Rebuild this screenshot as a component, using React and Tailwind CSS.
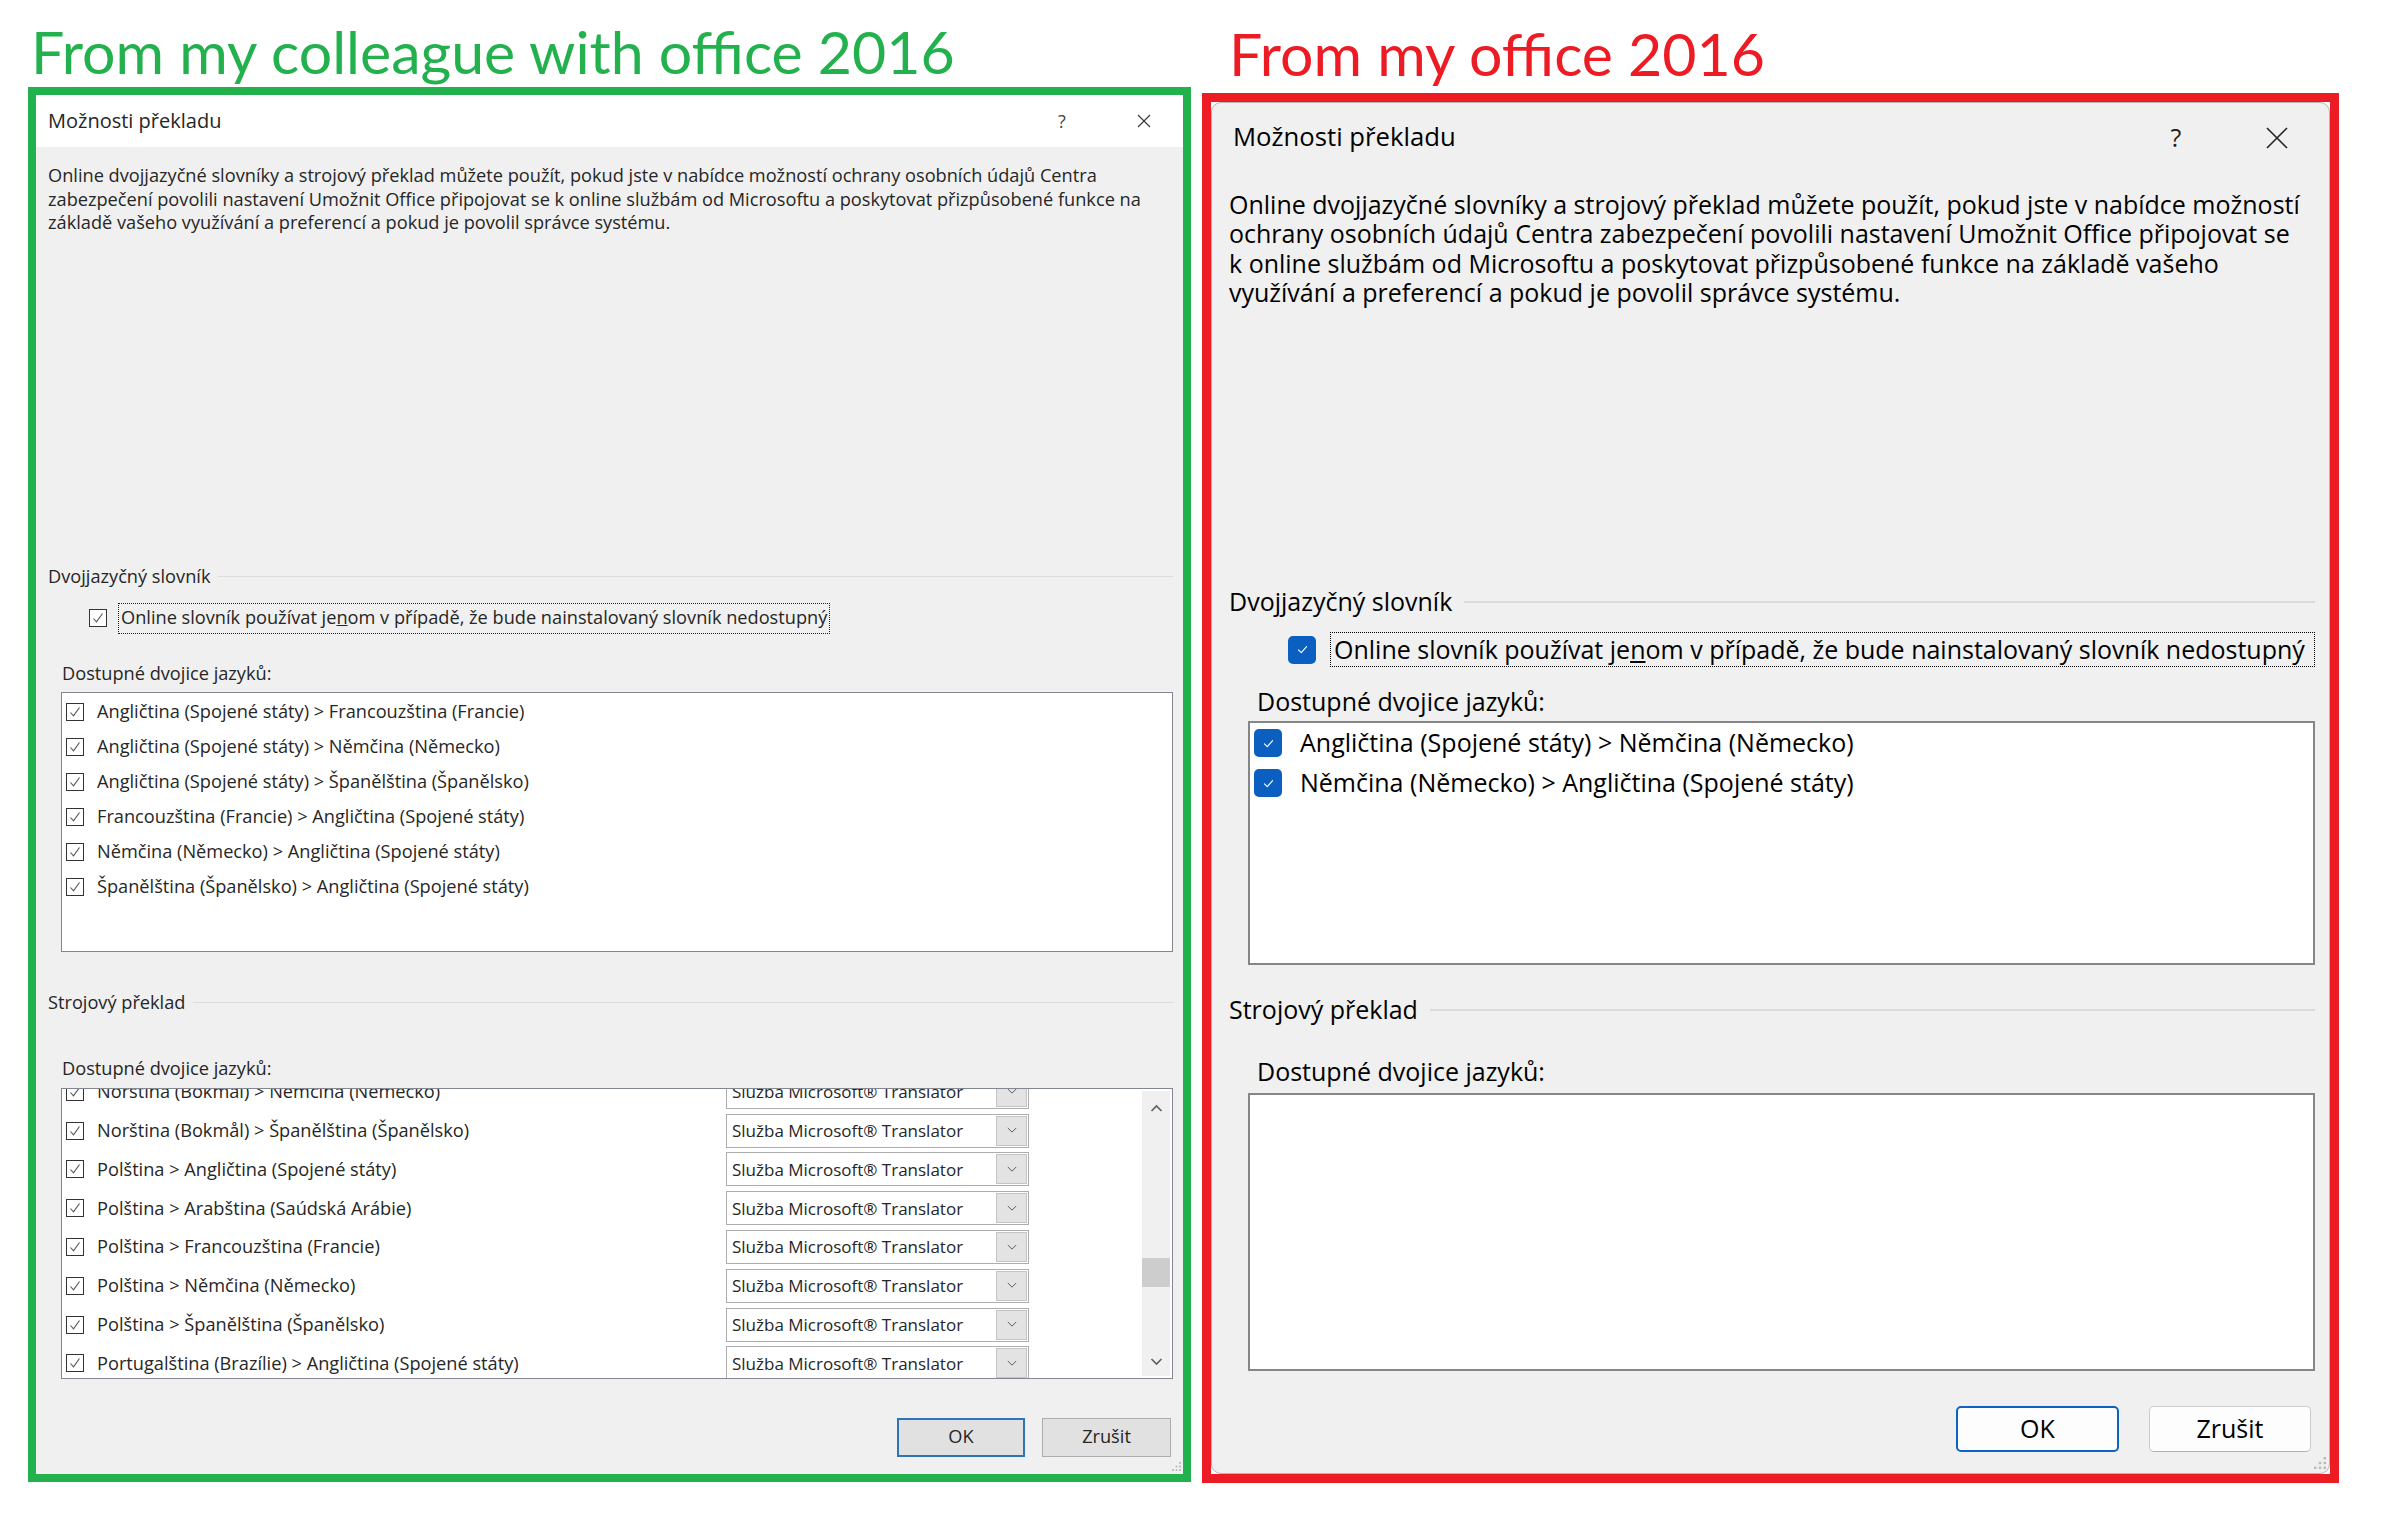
import React from "react";

const OS = "font-['Open_Sans','Noto_Sans',sans-serif]";

function SmallCheck() {
  return (
    <span className="w-[18px] h-[18px] shrink-0 border border-[#333333] bg-white flex items-center justify-center">
      <svg viewBox="0 0 14 14" className="w-[14px] h-[14px]">
        <path d="M2.5 7.5 L5.5 10.8 L11.5 2.5" fill="none" stroke="#555555" strokeWidth="1.1" />
      </svg>
    </span>
  );
}

function BlueCheck() {
  return (
    <span className="w-[28px] h-[28px] shrink-0 rounded-[5px] bg-[#0b5fc0] flex items-center justify-center">
      <svg viewBox="0 0 16 16" className="w-[13px] h-[13px]">
        <path d="M3 8.5 L6.5 11.8 L13 4.5" fill="none" stroke="#ffffff" strokeWidth="1.4" strokeLinecap="round" strokeLinejoin="round" />
      </svg>
    </span>
  );
}

function Chevron({ up, className, stroke = "#606060", sw = 1.5 }) {
  return (
    <svg viewBox="0 0 12 8" className={className}>
      <path d={up ? "M1 7 L6 2 L11 7" : "M1 1 L6 6 L11 1"} fill="none" stroke={stroke} strokeWidth={sw} />
    </svg>
  );
}

function Grip({ className }) {
  return (
    <svg viewBox="0 0 10 10" className={className}>
      <rect x="8" y="0" width="2" height="2" fill="#b8b8b8" />
      <rect x="8" y="4" width="2" height="2" fill="#b8b8b8" />
      <rect x="4" y="4" width="2" height="2" fill="#b8b8b8" />
      <rect x="8" y="8" width="2" height="2" fill="#b8b8b8" />
      <rect x="4" y="8" width="2" height="2" fill="#b8b8b8" />
      <rect x="0" y="8" width="2" height="2" fill="#b8b8b8" />
    </svg>
  );
}

const leftDict = [
  "Angličtina (Spojené státy) > Francouzština (Francie)",
  "Angličtina (Spojené státy) > Němčina (Německo)",
  "Angličtina (Spojené státy) > Španělština (Španělsko)",
  "Francouzština (Francie) > Angličtina (Spojené státy)",
  "Němčina (Německo) > Angličtina (Spojené státy)",
  "Španělština (Španělsko) > Angličtina (Spojené státy)",
];

const leftMt = [
  "Norština (Bokmål) > Němčina (Německo)",
  "Norština (Bokmål) > Španělština (Španělsko)",
  "Polština > Angličtina (Spojené státy)",
  "Polština > Arabština (Saúdská Arábie)",
  "Polština > Francouzština (Francie)",
  "Polština > Němčina (Německo)",
  "Polština > Španělština (Španělsko)",
  "Portugalština (Brazílie) > Angličtina (Spojené státy)",
];

function LeftDialog() {
  return (
    <div className={`relative w-full h-full bg-[#f0f0f0] flex flex-col ${OS} text-[#262626]`}>
      <div className="h-[52px] bg-white flex items-center pl-[12px] shrink-0">
        <span className="text-[20px]">Možnosti překladu</span>
        <span className="flex-1" />
        <span className="w-[14px] text-center text-[18px] text-[#444444]">?</span>
        <span className="w-[68px]" />
        <svg viewBox="0 0 14 14" className="w-[14px] h-[14px]">
          <path d="M1 1 L13 13 M13 1 L1 13" stroke="#333333" strokeWidth="1.1" />
        </svg>
        <span className="w-[32px]" />
      </div>
      <div className="flex flex-col pl-[12px] pr-[10px] text-[18.2px]">
        <div className="mt-[17px] leading-[23.5px] whitespace-nowrap">
          <div>Online dvojjazyčné slovníky a strojový překlad můžete použít, pokud jste v nabídce možností ochrany osobních údajů Centra</div>
          <div>zabezpečení povolili nastavení Umožnit Office připojovat se k online službám od Microsoftu a poskytovat přizpůsobené funkce na</div>
          <div>základě vašeho využívání a preferencí a pokud je povolil správce systému.</div>
        </div>
        <div className="mt-[330px] h-[24px] flex items-center gap-[8px]">
          <span>Dvojjazyčný slovník</span>
          <span className="flex-1 h-px bg-[#dcdcdc]" />
        </div>
        <div className="mt-[14px] h-[31px] flex items-center">
          <span className="ml-[41px]"><SmallCheck /></span>
          <span className="ml-[11px] h-[31px] border border-dotted border-[#222222] flex items-center px-[2px] whitespace-nowrap">
            Online slovník používat je<span className="underline">n</span>om v případě, že bude nainstalovaný slovník nedostupný
          </span>
        </div>
        <div className="mt-[28px] h-[24px] flex items-center ml-[14px]">Dostupné dvojice jazyků:</div>
        <div className="mt-[6px] ml-[13px] h-[260px] border border-[#828790] bg-white pt-[2px] flex flex-col">
          {leftDict.map((t) => (
            <div key={t} className="h-[35px] flex items-center pl-[4px] gap-[13px] whitespace-nowrap">
              <SmallCheck />
              <span>{t}</span>
            </div>
          ))}
        </div>
        <div className="mt-[39px] h-[24px] flex items-center gap-[8px]">
          <span>Strojový překlad</span>
          <span className="flex-1 h-px bg-[#dcdcdc]" />
        </div>
        <div className="mt-[42px] h-[24px] flex items-center ml-[14px]">Dostupné dvojice jazyků:</div>
        <div className="mt-[7px] ml-[13px] h-[291px] border border-[#828790] bg-white flex overflow-hidden">
          <div className="flex-1 flex flex-col -mt-[16px]">
            {leftMt.map((t) => (
              <div key={t} className="h-[38.8px] shrink-0 flex items-center">
                <div className="w-[664px] shrink-0 flex items-center pl-[4px] gap-[13px] whitespace-nowrap">
                  <SmallCheck />
                  <span>{t}</span>
                </div>
                <div className="w-[303px] h-[34px] border border-[#adadad] bg-white flex items-center">
                  <span className="flex-1 pl-[5px] whitespace-nowrap text-[17px]">Služba Microsoft® Translator</span>
                  <span className="w-[31px] h-[30px] mr-[1px] bg-[#e3e3e3] border border-[#c4c4c4] flex items-center justify-center">
                    <Chevron className="w-[10px] h-[7px]" stroke="#505050" sw={1.1} />
                  </span>
                </div>
              </div>
            ))}
          </div>
          <div className="w-[28px] mr-[2px] my-[2px] bg-[#f0f0f0] flex flex-col">
            <div className="h-[34px] flex items-center justify-center">
              <Chevron up className="w-[13px] h-[8px]" sw={1.7} />
            </div>
            <div className="mt-[133px] h-[29px] bg-[#cdcdcd]" />
            <div className="flex-1" />
            <div className="h-[28px] flex items-center justify-center">
              <Chevron className="w-[13px] h-[8px]" sw={1.7} />
            </div>
          </div>
        </div>
        <div className="mt-[39px] flex justify-end gap-[17px] mr-[2px]">
          <button className="w-[128px] h-[39px] border-2 border-[#2f74b8] bg-[#e1e1e1] text-[18.2px] text-[#262626]">OK</button>
          <button className="w-[129px] h-[39px] border border-[#adadad] bg-[#e1e1e1] text-[18.2px] text-[#262626]">Zrušit</button>
        </div>
      </div>
      <Grip className="absolute right-[2px] bottom-[3px] w-[9px] h-[9px]" />
    </div>
  );
}

function RightDialog() {
  return (
    <div className={`relative w-full h-full bg-[#f0f0f0] border border-[#b4b4b4] rounded-[10px] flex flex-col ${OS} text-black`}>
      <div className="h-[69px] flex items-center pl-[21px] shrink-0">
        <span className="text-[25.7px]">Možnosti překladu</span>
        <span className="flex-1" />
        <span className="w-[16px] text-center text-[25px] text-[#222222]">?</span>
        <span className="w-[82px]" />
        <svg viewBox="0 0 22 22" className="w-[22px] h-[22px]">
          <path d="M1 1 L21 21 M21 1 L1 21" stroke="#222222" strokeWidth="1.6" />
        </svg>
        <span className="w-[41px]" />
      </div>
      <div className="flex flex-col pl-[17px] pr-[14px] text-[25px]">
        <div className="mt-[18px] leading-[29.3px] whitespace-nowrap">
          <div>Online dvojjazyčné slovníky a strojový překlad můžete použít, pokud jste v nabídce možností</div>
          <div>ochrany osobních údajů Centra zabezpečení povolili nastavení Umožnit Office připojovat se</div>
          <div>k online službám od Microsoftu a poskytovat přizpůsobené funkce na základě vašeho</div>
          <div>využívání a preferencí a pokud je povolil správce systému.</div>
        </div>
        <div className="mt-[280px] h-[30px] flex items-center gap-[12px]">
          <span>Dvojjazyčný slovník</span>
          <span className="flex-1 h-[2px] bg-[#dadada]" />
        </div>
        <div className="mt-[15px] h-[35px] flex items-center">
          <span className="ml-[59px]"><BlueCheck /></span>
          <span className="ml-[14px] flex-1 h-[35px] border border-dotted border-black flex items-center pl-[3px] whitespace-nowrap">
            Online slovník používat je<span className="underline">n</span>om v případě, že bude nainstalovaný slovník nedostupný
          </span>
        </div>
        <div className="mt-[20px] h-[30px] flex items-center ml-[28px]">Dostupné dvojice jazyků:</div>
        <div className="mt-[4px] ml-[19px] h-[244px] border-2 border-[#868686] bg-white flex flex-col">
          {["Angličtina (Spojené státy) > Němčina (Německo)", "Němčina (Německo) > Angličtina (Spojené státy)"].map((t) => (
            <div key={t} className="h-[40px] flex items-center pl-[4px] gap-[18px] whitespace-nowrap">
              <BlueCheck />
              <span>{t}</span>
            </div>
          ))}
        </div>
        <div className="mt-[30px] h-[30px] flex items-center gap-[12px]">
          <span>Strojový překlad</span>
          <span className="flex-1 h-[2px] bg-[#dadada]" />
        </div>
        <div className="mt-[32px] h-[30px] flex items-center ml-[28px]">Dostupné dvojice jazyků:</div>
        <div className="mt-[6px] ml-[19px] h-[278px] border-2 border-[#868686] bg-white" />
        <div className="mt-[35px] flex justify-end gap-[30px] mr-[4px]">
          <button className="w-[163px] h-[46px] rounded-[5px] border-2 border-[#0c64c0] bg-[#fdfdfd] text-[25px] text-black">OK</button>
          <button className="w-[162px] h-[46px] rounded-[5px] border border-[#cccccc] border-b-[#b0b0b0] bg-[#fdfdfd] text-[25px] text-black">Zrušit</button>
        </div>
      </div>
      <Grip className="absolute right-[3px] bottom-[4px] w-[12px] h-[12px]" />
    </div>
  );
}

export default function App() {
  return (
    <div className="w-[2393px] h-[1522px] bg-white flex items-start">
      <div className="ml-[28px] w-[1163px] flex flex-col shrink-0">
        <div className="h-[87px] pl-[3px] pt-[22px] font-['Lato',sans-serif] text-[59px] leading-none text-[#22b14c] whitespace-nowrap">
          From my colleague with office 2016
        </div>
        <div className="h-[1395px] border-[8px] border-[#22b14c]">
          <LeftDialog />
        </div>
      </div>
      <div className="ml-[11px] w-[1137px] flex flex-col shrink-0">
        <div className="h-[93px] pl-[27px] pt-[24px] font-['Lato',sans-serif] text-[59px] leading-none text-[#ed1c24] whitespace-nowrap">
          From my office 2016
        </div>
        <div className="h-[1390px] border-[9px] border-[#ed1c24] bg-white">
          <RightDialog />
        </div>
      </div>
    </div>
  );
}
